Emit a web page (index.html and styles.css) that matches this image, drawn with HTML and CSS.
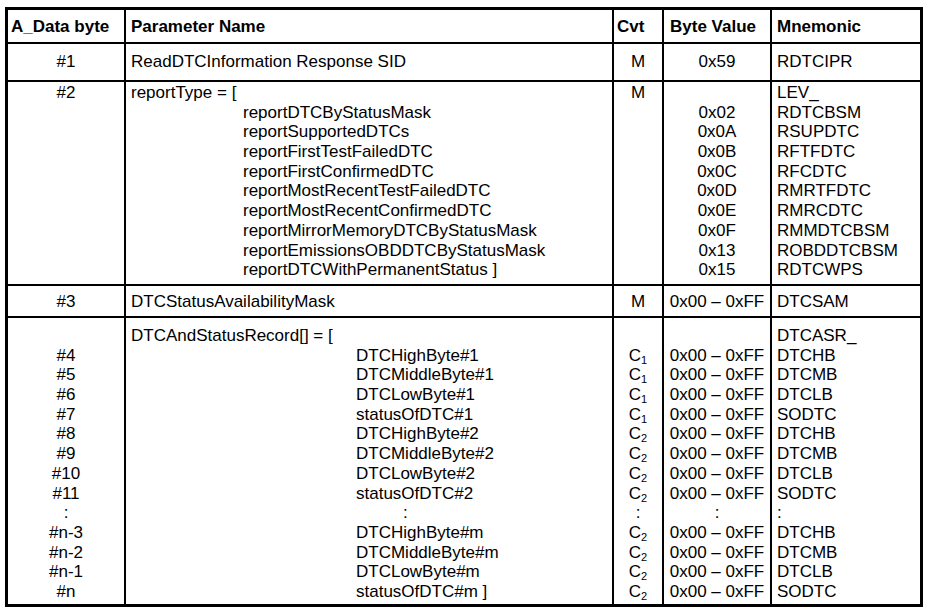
FILE: index.html
```html
<!DOCTYPE html>
<html>
<head>
<meta charset="utf-8">
<link rel="stylesheet" href="styles.css">
</head>
<body>
<div class="page">
<table class="spec">
  <colgroup>
    <col class="c-byte">
    <col class="c-name">
    <col class="c-cvt">
    <col class="c-val">
    <col class="c-mn">
  </colgroup>
  <thead>
    <tr class="r-head">
      <th class="h-byte">A_Data byte</th>
      <th class="h-name">Parameter Name</th>
      <th class="h-cvt">Cvt</th>
      <th class="h-val">Byte Value</th>
      <th class="h-mn">Mnemonic</th>
    </tr>
  </thead>
  <tbody>
    <tr class="r-one">
      <td class="center">#1</td>
      <td class="name">ReadDTCInformation Response SID</td>
      <td class="center">M</td>
      <td class="center">0x59</td>
      <td class="mn">RDTCIPR</td>
    </tr>
    <tr class="r-list">
      <td class="center"><div class="ln">#2</div></td>
      <td class="name">
        <div class="ln">reportType = [</div>
        <div class="ln ind1">reportDTCByStatusMask</div>
        <div class="ln ind1">reportSupportedDTCs</div>
        <div class="ln ind1">reportFirstTestFailedDTC</div>
        <div class="ln ind1">reportFirstConfirmedDTC</div>
        <div class="ln ind1">reportMostRecentTestFailedDTC</div>
        <div class="ln ind1">reportMostRecentConfirmedDTC</div>
        <div class="ln ind1">reportMirrorMemoryDTCByStatusMask</div>
        <div class="ln ind1">reportEmissionsOBDDTCByStatusMask</div>
        <div class="ln ind1">reportDTCWithPermanentStatus ]</div>
      </td>
      <td class="center"><div class="ln">M</div></td>
      <td class="center">
        <div class="ln">&nbsp;</div>
        <div class="ln">0x02</div>
        <div class="ln">0x0A</div>
        <div class="ln">0x0B</div>
        <div class="ln">0x0C</div>
        <div class="ln">0x0D</div>
        <div class="ln">0x0E</div>
        <div class="ln">0x0F</div>
        <div class="ln">0x13</div>
        <div class="ln">0x15</div>
      </td>
      <td class="mn">
        <div class="ln">LEV_</div>
        <div class="ln">RDTCBSM</div>
        <div class="ln">RSUPDTC</div>
        <div class="ln">RFTFDTC</div>
        <div class="ln">RFCDTC</div>
        <div class="ln">RMRTFDTC</div>
        <div class="ln">RMRCDTC</div>
        <div class="ln">RMMDTCBSM</div>
        <div class="ln">ROBDDTCBSM</div>
        <div class="ln">RDTCWPS</div>
      </td>
    </tr>
    <tr class="r-three">
      <td class="center">#3</td>
      <td class="name">DTCStatusAvailabilityMask</td>
      <td class="center">M</td>
      <td class="center">0x00 – 0xFF</td>
      <td class="mn">DTCSAM</td>
    </tr>
    <tr class="r-rec">
      <td class="center">
        <div class="ln">&nbsp;</div>
        <div class="ln">#4</div>
        <div class="ln">#5</div>
        <div class="ln">#6</div>
        <div class="ln">#7</div>
        <div class="ln">#8</div>
        <div class="ln">#9</div>
        <div class="ln">#10</div>
        <div class="ln">#11</div>
        <div class="ln">:</div>
        <div class="ln">#n-3</div>
        <div class="ln">#n-2</div>
        <div class="ln">#n-1</div>
        <div class="ln">#n</div>
      </td>
      <td class="name">
        <div class="ln">DTCAndStatusRecord[] = [</div>
        <div class="ln ind2">DTCHighByte#1</div>
        <div class="ln ind2">DTCMiddleByte#1</div>
        <div class="ln ind2">DTCLowByte#1</div>
        <div class="ln ind2">statusOfDTC#1</div>
        <div class="ln ind2">DTCHighByte#2</div>
        <div class="ln ind2">DTCMiddleByte#2</div>
        <div class="ln ind2">DTCLowByte#2</div>
        <div class="ln ind2">statusOfDTC#2</div>
        <div class="ln ind3">:</div>
        <div class="ln ind2">DTCHighByte#m</div>
        <div class="ln ind2">DTCMiddleByte#m</div>
        <div class="ln ind2">DTCLowByte#m</div>
        <div class="ln ind2">statusOfDTC#m ]</div>
      </td>
      <td class="center">
        <div class="ln">&nbsp;</div>
        <div class="ln">C<sub>1</sub></div>
        <div class="ln">C<sub>1</sub></div>
        <div class="ln">C<sub>1</sub></div>
        <div class="ln">C<sub>1</sub></div>
        <div class="ln">C<sub>2</sub></div>
        <div class="ln">C<sub>2</sub></div>
        <div class="ln">C<sub>2</sub></div>
        <div class="ln">C<sub>2</sub></div>
        <div class="ln">:</div>
        <div class="ln">C<sub>2</sub></div>
        <div class="ln">C<sub>2</sub></div>
        <div class="ln">C<sub>2</sub></div>
        <div class="ln">C<sub>2</sub></div>
      </td>
      <td class="center">
        <div class="ln">&nbsp;</div>
        <div class="ln">0x00 – 0xFF</div>
        <div class="ln">0x00 – 0xFF</div>
        <div class="ln">0x00 – 0xFF</div>
        <div class="ln">0x00 – 0xFF</div>
        <div class="ln">0x00 – 0xFF</div>
        <div class="ln">0x00 – 0xFF</div>
        <div class="ln">0x00 – 0xFF</div>
        <div class="ln">0x00 – 0xFF</div>
        <div class="ln">:</div>
        <div class="ln">0x00 – 0xFF</div>
        <div class="ln">0x00 – 0xFF</div>
        <div class="ln">0x00 – 0xFF</div>
        <div class="ln">0x00 – 0xFF</div>
      </td>
      <td class="mn">
        <div class="ln">DTCASR_</div>
        <div class="ln">DTCHB</div>
        <div class="ln">DTCMB</div>
        <div class="ln">DTCLB</div>
        <div class="ln">SODTC</div>
        <div class="ln">DTCHB</div>
        <div class="ln">DTCMB</div>
        <div class="ln">DTCLB</div>
        <div class="ln">SODTC</div>
        <div class="ln">:</div>
        <div class="ln">DTCHB</div>
        <div class="ln">DTCMB</div>
        <div class="ln">DTCLB</div>
        <div class="ln">SODTC</div>
      </td>
    </tr>
  </tbody>
</table>
</div>
</body>
</html>
```

FILE: styles.css
```css
* { box-sizing: border-box; }

html, body {
  margin: 0;
  padding: 0;
  background: #fff;
}

.page {
  padding: 7px 0 0 5px;
}

.spec {
  table-layout: fixed;
  width: 918px;
  border: 3px solid #000;
  border-collapse: separate;
  border-spacing: 0;
  font-family: "Liberation Sans", Arial, sans-serif;
  font-size: 17px;
  line-height: 19.7px;
  color: #000;
}

.c-byte { width: 118px; }
.c-name { width: 488px; }
.c-cvt { width: 50px; }
.c-val { width: 108px; }
.c-mn { width: 148px; }

.spec th,
.spec td {
  border-right: 2px solid #000;
  border-bottom: 2px solid #000;
  padding: 0;
  vertical-align: middle;
  white-space: nowrap;
  overflow: hidden;
}

.spec th:last-child,
.spec td:last-child {
  border-right: none;
}

.spec tbody tr:last-child td {
  border-bottom: none;
}

.spec th {
  font-weight: bold;
  text-align: left;
  height: 34px;
  padding-top: 1px;
}

.h-byte { padding-left: 3px !important; }
.h-name { padding-left: 5px !important; }
.h-cvt { padding-left: 3px !important; }
.h-val { padding-left: 6px !important; }
.h-mn { padding-left: 5px !important; }

.center { text-align: center; }
.name { text-align: left; padding-left: 5px !important; }
.mn { text-align: left; padding-left: 5px !important; }

.r-one td { height: 38px; }
.r-three td { height: 32px; padding-top: 2px; }

.r-list td {
  vertical-align: top;
  padding-top: 1px;
  padding-bottom: 4px;
  height: 204px;
}

.r-rec td {
  vertical-align: top;
  padding-top: 8px;
  height: 286px;
}

.ln {
  height: 19.7px;
  line-height: 19.7px;
}

.ind1 { padding-left: 112px; }
.ind2 { padding-left: 225px; }
.ind3 { padding-left: 272px; }

sub {
  font-size: 11px;
  line-height: 0;
  vertical-align: -3px;
}
```
